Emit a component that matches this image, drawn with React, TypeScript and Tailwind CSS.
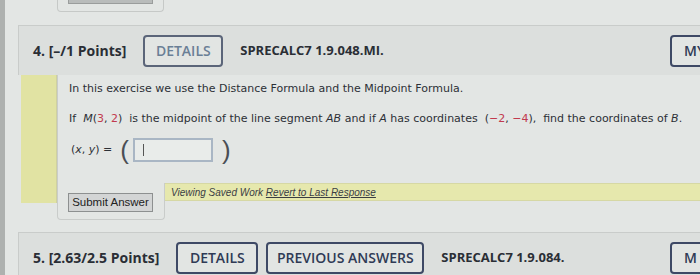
import React from "react";

const red = "text-[#c23a4e]";

function HeaderRow({
  label,
  code,
  prev,
  faded,
  corner,
}: {
  label: string;
  code: string;
  prev?: boolean;
  faded?: boolean;
  corner: string;
}) {
  const btn =
    "h-[32px] flex items-center justify-center border-2 rounded-[4px] text-[14px] font-semibold shrink-0 whitespace-nowrap bg-[#e2e5e3]";
  return (
    <div className="ml-[13px] h-[50px] shrink-0 flex items-center pl-[14px] bg-[#dcdfdd] border-t border-l border-[#c9ccca] font-['Open_Sans',sans-serif] text-[#2a2e35] whitespace-nowrap">
      <span className="text-[14px] font-bold whitespace-pre">{label}</span>
      <div className="flex gap-[8px] ml-[17px]">
        <div
          className={
            faded
              ? `${btn} w-[80px] border-[#5b6579] text-[#6a7f96]`
              : `${btn} w-[82px] border-[#3e4965] text-[#2f3a55]`
          }
        >
          DETAILS
        </div>
        {prev && <div className={`${btn} w-[158px] border-[#3e4965] text-[#2f3a55]`}>PREVIOUS ANSWERS</div>}
      </div>
      <span className="ml-[17px] text-[13px] font-bold">{code}</span>
      <div className="ml-auto -mr-[16px] h-[32px] w-[46px] flex items-center pl-[12px] border-2 border-[#3e4965] rounded-[4px] text-[14px] font-semibold text-[#2f3a55] bg-[#e2e5e3]">
        {corner}
      </div>
    </div>
  );
}

export default function App() {
  return (
    <div className="w-[700px] h-[275px] overflow-hidden bg-[#e3e6e4] flex flex-col border-l-[5px] border-[#aeb1af] font-['DejaVu_Sans',sans-serif] text-[#2c3036]">
      {/* previous question remnant */}
      <div className="h-[25px] shrink-0 pl-[52px]">
        <div className="w-[107px] h-[12px] border border-t-0 border-[#c6c9c7] rounded-b-[4px] pl-[10px]">
          <div className="w-[85px] h-[4px] bg-[#b9bcbb] border border-t-0 border-[#9a9d9c]" />
        </div>
      </div>

      <HeaderRow label="4. [–/1 Points]" code="SPRECALC7 1.9.048.MI." faded corner="MY" />

      {/* question body */}
      <div className="flex h-[157px] shrink-0">
        <div className="ml-[16px] w-[36px] h-[128px] bg-[#e1e3a3] border-r border-[#cfd1a0] shrink-0" />
        <div className="flex-1 flex flex-col">
          <div className="h-[108px] border-l border-[#c9ccca] pl-[11px] pt-[7px] text-[11px]">
            <p className="leading-[14px]">
              In this exercise we use the Distance Formula and the Midpoint Formula.
            </p>
            <p className="leading-[14px] mt-[16px] whitespace-pre">
              If  <i>M</i>(<span className={red}>3</span>, <span className={red}>2</span>)  is the
              midpoint of the line segment <i>AB</i> and if <i>A</i> has coordinates  (
              <span className={red}>−2</span>, <span className={red}>−4</span>),  find the
              coordinates of <i>B</i>.
            </p>
            <div className="flex items-center mt-[11px] pl-[2px]">
              <span className="whitespace-pre">
                (<i>x</i>, <i>y</i>) =
              </span>
              <span className="ml-[8px] text-[26px] font-light leading-none text-[#4a4e55] font-['Liberation_Sans',sans-serif]">
                (
              </span>
              <div className="ml-[4px] w-[80px] h-[24px] border-2 border-[#a9b6c4] bg-[#e9ecea] flex items-center pl-[8px]">
                <div className="w-[1px] h-[12px] bg-[#555]" />
              </div>
              <span className="ml-[9px] text-[26px] font-light leading-none text-[#4a4e55] font-['Liberation_Sans',sans-serif]">
                )
              </span>
            </div>
          </div>
          <div className="flex items-start">
            <div className="w-[108px] h-[37px] shrink-0 border-l border-r border-b border-[#c9ccca] rounded-b-[4px] pl-[10px] pt-[10px]">
              <div className="w-[85px] h-[19px] flex items-center justify-center bg-[#d3d5d5] border border-[#8d9090] text-[11.5px] text-[#222] font-['Liberation_Sans',sans-serif]">
                Submit Answer
              </div>
            </div>
            <div className="flex-1 h-[18px] bg-[#e6e8ad] border-y border-[#d6d8a4] pl-[6px] flex items-center font-['Liberation_Sans',sans-serif] italic text-[10px] text-[#3a3d44]">
              Viewing Saved Work&nbsp;<span className="underline">Revert to Last Response</span>
            </div>
          </div>
        </div>
      </div>

      <HeaderRow label="5. [2.63/2.5 Points]" code="SPRECALC7 1.9.084." prev corner="M" />
    </div>
  );
}
